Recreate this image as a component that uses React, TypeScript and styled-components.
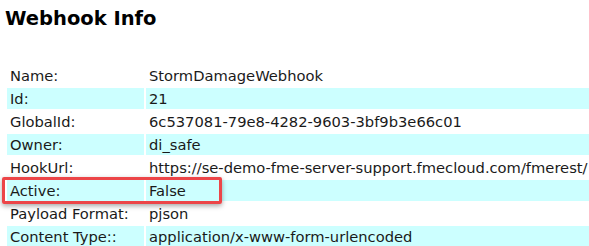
import React from "react";
import styled, { createGlobalStyle } from "styled-components";

const Global = createGlobalStyle`
  html, body { margin: 0; padding: 0; background: #ffffff; overflow: hidden; }
  body { font-family: "DejaVu Sans", Verdana, sans-serif; color: #111; }
`;

const Page = styled.div`
  position: relative;
  padding: 8px 0 0 5px;
  width: 700px;
`;

const Title = styled.h2`
  margin: 0 0 33px 0;
  font-size: 19.5px;
  font-weight: bold;
  line-height: 22px;
  color: #000;
`;

const Table = styled.table`
  border-collapse: separate;
  border-spacing: 2px;
  font-size: 14.7px;
  line-height: 17px;
  white-space: nowrap;
`;

const Row = styled.tr<{ $shade: boolean }>`
  background: ${(p) => (p.$shade ? "#ccffff" : "transparent")};
`;

const Label = styled.td`
  width: 131px;
  min-width: 131px;
  height: 21px;
  padding: 0 3px;
  color: #1a1a1a;
`;

const Value = styled.td`
  width: 600px;
  height: 21px;
  padding: 0 3px;
  color: #1a1a1a;
`;

const Highlight = styled.div`
  position: absolute;
  left: 2px;
  top: 177px;
  width: 214px;
  height: 21px;
  border: 3px solid #ec4548;
  border-radius: 2px;
  box-shadow: 0 2px 5px rgba(0, 0, 0, 0.35);
`;

const rows: [string, string][] = [
  ["Name:", "StormDamageWebhook"],
  ["Id:", "21"],
  ["GlobalId:", "6c537081-79e8-4282-9603-3bf9b3e66c01"],
  ["Owner:", "di_safe"],
  ["HookUrl:", "https://se-demo-fme-server-support.fmecloud.com/fmerest/"],
  ["Active:", "False"],
  ["Payload Format:", "pjson"],
  ["Content Type::", "application/x-www-form-urlencoded"],
];

export default function App() {
  return (
    <>
      <Global />
      <Page>
        <Title>Webhook Info</Title>
        <Table>
          <tbody>
            {rows.map(([k, v], i) => (
              <Row key={k} $shade={i % 2 === 1}>
                <Label>{k}</Label>
                <Value>{v}</Value>
              </Row>
            ))}
          </tbody>
        </Table>
        <Highlight />
      </Page>
    </>
  );
}
